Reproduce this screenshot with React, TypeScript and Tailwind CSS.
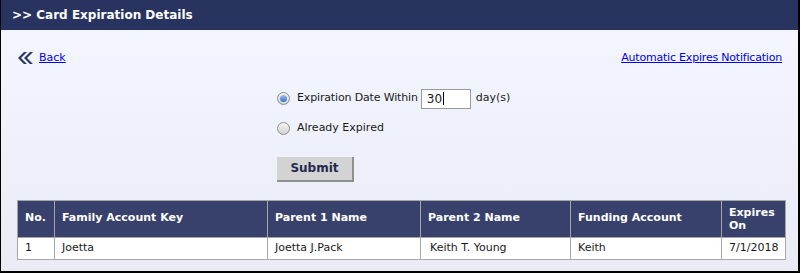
import React from 'react';

const rows = [
  { no: '1', key: 'Joetta', p1: 'Joetta J.Pack', p2: 'Keith T. Young', fund: 'Keith', exp: '7/1/2018' },
];

export default function App() {
  return (
    <div
      className="w-[801px] h-[274px] bg-white"
      style={{ fontFamily: '"DejaVu Sans", Verdana, sans-serif' }}
    >
      <div className="w-[800px] h-[273px] border-l border-r-2 border-b-2 border-black flex flex-col bg-gradient-to-b from-[#f4f7ff] to-[#e9ecf4]">
        {/* header */}
        <div className="h-[30px] bg-[#283360] text-white font-bold text-[12px] flex items-center pl-[11px]">
          &gt;&gt; Card Expiration Details
        </div>

        {/* links */}
        <div className="flex justify-between items-center px-[16px] mt-[20px] text-[11px]">
          <div className="flex items-center gap-[5px]">
            <svg width="17" height="12" viewBox="0 0 17 12">
              <path d="M7 0 L1 6 L7 12 L10 12 L4 6 L10 0 Z" fill="#2b3566" />
              <path d="M13 0 L7 6 L13 12 L16 12 L10 6 L16 0 Z" fill="#2b3566" />
            </svg>
            <a href="#" className="text-[#0000ee] underline">Back</a>
          </div>
          <a href="#" className="text-[#0000ee] underline tracking-[-0.2px]">Automatic Expires Notification</a>
        </div>

        {/* form */}
        <div className="pl-[276px] mt-[22px] text-[11px] text-[#1a1a1a]">
          <div className="flex items-center h-[20px]">
            <span className="w-[13px] h-[13px] rounded-full border border-[#8d8d8d] bg-gradient-to-b from-[#f2f2f2] to-[#d6d6d6] flex items-center justify-center mr-[7px]">
              <span className="w-[7px] h-[7px] rounded-full bg-gradient-to-b from-[#9cc2f4] to-[#3a6fc6]" />
            </span>
            <span className="tracking-[-0.15px]">Expiration Date Within</span>
            <span className="ml-[3px] w-[50px] h-[20px] border border-[#9a9a9a] bg-white flex items-center pl-[5px] text-[12px]">
              30<span className="w-px h-[13px] bg-black ml-px" />
            </span>
            <span className="ml-[5px]">day(s)</span>
          </div>
          <div className="flex items-center h-[20px] mt-[10px]">
            <span className="w-[13px] h-[13px] rounded-full border border-[#8d8d8d] bg-gradient-to-b from-[#f4f4f4] to-[#d4d4d4] mr-[7px]" />
            <span>Already Expired</span>
          </div>
          <button className="mt-[18px] w-[77px] h-[25px] bg-[#d3d3d3] border-r-2 border-b-2 border-[#8f8f8f] text-[#1f2a50] font-bold text-[12px]">
            Submit
          </button>
        </div>

        {/* table */}
        <div className="px-[16px] mt-[18px]">
          <table className="w-[769px] border-collapse text-[11px]">
            <thead>
              <tr className="bg-[#38416b] text-white">
                <th className="h-[37px] w-[37px] border border-[#a6a6a6] text-left pl-[7px] font-bold">No.</th>
                <th className="h-[37px] w-[213px] border border-[#a6a6a6] text-left pl-[7px] font-bold">Family Account Key</th>
                <th className="h-[37px] w-[153px] border border-[#a6a6a6] text-left pl-[7px] font-bold">Parent 1 Name</th>
                <th className="h-[37px] w-[150px] border border-[#a6a6a6] text-left pl-[7px] font-bold">Parent 2 Name</th>
                <th className="h-[37px] w-[151px] border border-[#a6a6a6] text-left pl-[7px] font-bold">Funding Account</th>
                <th className="h-[37px] border border-[#a6a6a6] text-left pl-[7px] font-bold leading-[13px]">Expires<br />On</th>
              </tr>
            </thead>
            <tbody>
              {rows.map((r) => (
                <tr key={r.no} className="bg-white text-[#1a1a1a]">
                  <td className="h-[22px] border border-[#a6a6a6] pl-[7px]">{r.no}</td>
                  <td className="h-[22px] border border-[#a6a6a6] pl-[7px]">{r.key}</td>
                  <td className="h-[22px] border border-[#a6a6a6] pl-[7px]">{r.p1}</td>
                  <td className="h-[22px] border border-[#a6a6a6] pl-[9px]">{r.p2}</td>
                  <td className="h-[22px] border border-[#a6a6a6] pl-[7px]">{r.fund}</td>
                  <td className="h-[22px] border border-[#a6a6a6] pl-[7px]">{r.exp}</td>
                </tr>
              ))}
            </tbody>
          </table>
        </div>
      </div>
    </div>
  );
}
